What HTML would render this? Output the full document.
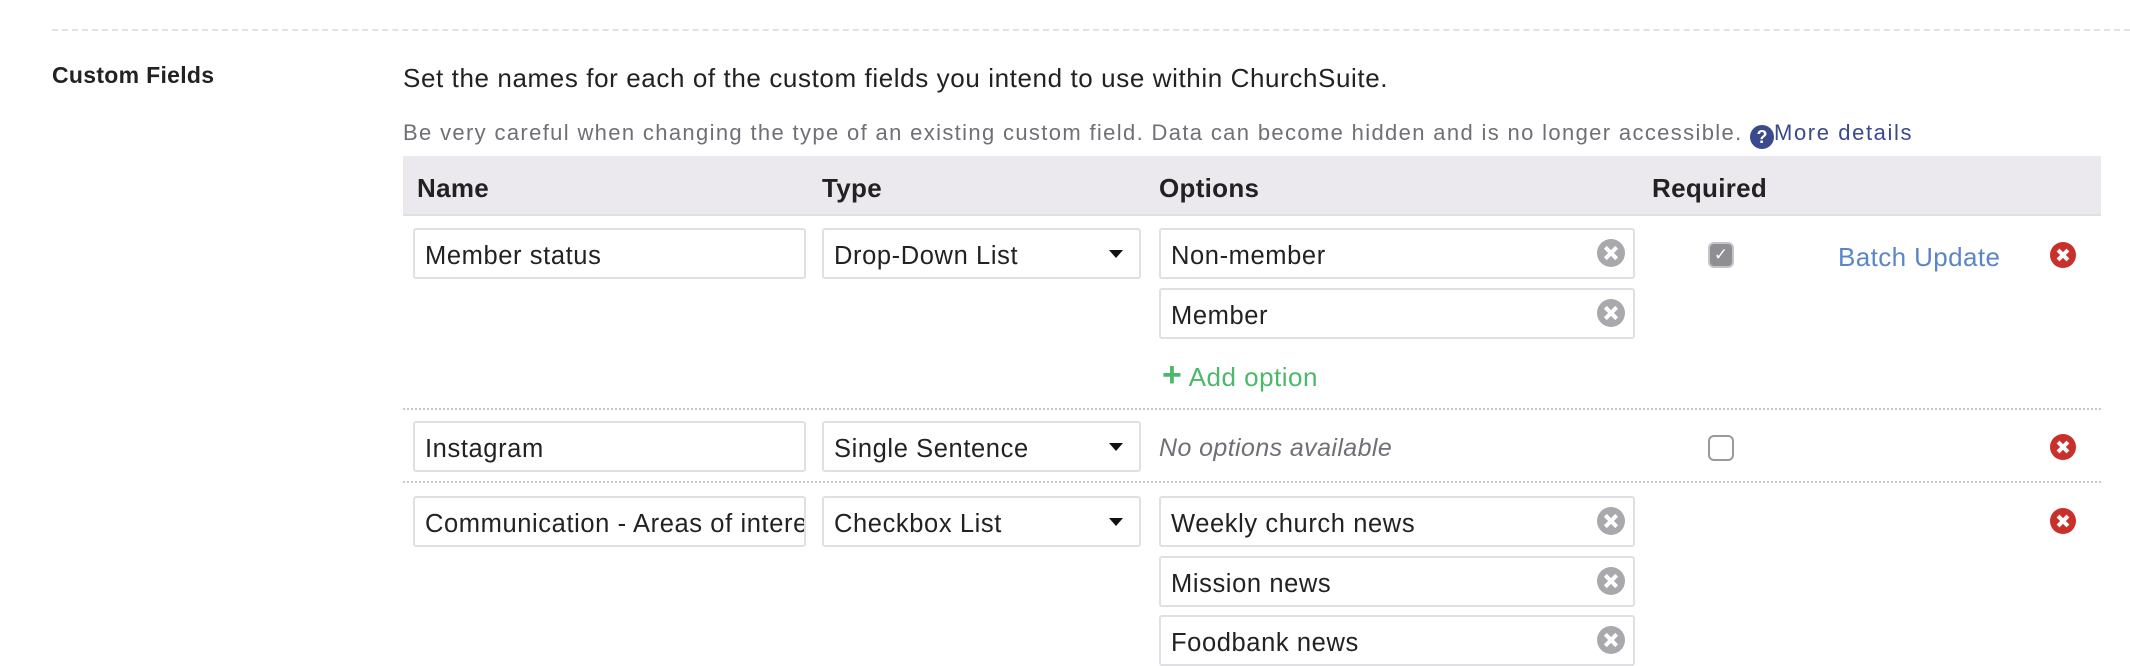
<!DOCTYPE html>
<html><head><meta charset="utf-8"><style>
*{box-sizing:border-box;margin:0;padding:0}
body{width:2130px;height:642px;overflow:hidden;background:#fff;font-family:"Liberation Sans",sans-serif;color:#222;position:relative}
.a{position:absolute;white-space:nowrap}
.dash{position:absolute;left:52px;right:0;top:29px;border-top:2px dashed #e2e2e6}
.dot{position:absolute;left:403px;width:1698px;border-top:2px dotted #c9c9cc}
.inp{position:absolute;height:51px;border:2px solid #e0dfe4;border-radius:3px;background:#fff;font-size:25.5px;letter-spacing:0.6px;line-height:47px;padding-top:3px;padding-left:10px;overflow:hidden;white-space:nowrap;color:#222}
.sel:after{content:"";position:absolute;right:16px;top:20px;border-left:7px solid transparent;border-right:7px solid transparent;border-top:8px solid #111}
.x{position:absolute;right:8px;top:9px;width:28px;height:28px;border-radius:50%;background:#a8a8ad}
.x:before,.x:after{content:"";position:absolute;left:12px;top:6px;width:4px;height:16px;background:#fff;transform:rotate(45deg)}
.x:after{transform:rotate(-45deg)}
.del{position:absolute;width:26px;height:26px;border-radius:50%;background:#c9302c}
.del:before,.del:after{content:"";position:absolute;left:11px;top:6px;width:4px;height:14px;background:#fff;transform:rotate(45deg)}
.del:after{transform:rotate(-45deg)}
.cb{position:absolute;width:26px;height:26px;border:2px solid #9a9a9e;border-radius:6px;background:#fff}
.h{position:absolute;white-space:nowrap;font-size:26px;font-weight:bold;letter-spacing:0.3px;top:173px}
</style></head><body>
<div class="dash"></div>
<div class="a" style="left:52px;top:62px;font-size:23px;font-weight:bold;letter-spacing:0.3px">Custom Fields</div>
<div class="a" style="left:403px;top:63px;font-size:26px;letter-spacing:0.6px">Set the names for each of the custom fields you intend to use within ChurchSuite.</div>
<div class="a" style="left:403px;top:120px;font-size:22px;letter-spacing:1.35px;color:#6f6f75">Be very careful when changing the type of an existing custom field. Data can become hidden and is no longer accessible. <span style="display:inline-block;width:24px;height:24px;border-radius:50%;background:#3a4a8c;color:#fff;font-weight:bold;font-size:18px;line-height:24px;text-align:center;vertical-align:-3px;letter-spacing:0">?</span><span style="color:#3a4a8c;letter-spacing:1.6px">More details</span></div>
<div style="position:absolute;left:403px;top:156px;width:1698px;height:60px;background:#ebe9ee;border-bottom:2px solid #e0dfe4"></div>
<div class="h" style="left:417px">Name</div>
<div class="h" style="left:822px">Type</div>
<div class="h" style="left:1159px">Options</div>
<div class="h" style="left:1652px">Required</div>

<div class="inp" style="left:413px;top:228px;width:393px">Member status</div>
<div class="inp sel" style="left:822px;top:228px;width:319px">Drop-Down List</div>
<div class="inp" style="left:1159px;top:228px;width:476px">Non-member<span class="x"></span></div>
<div class="inp" style="left:1159px;top:288px;width:476px">Member<span class="x"></span></div>
<div class="a" style="left:1162px;top:362px;font-size:26px;letter-spacing:0.5px;color:#4cb86a"><b style="font-size:34px;line-height:25px">+</b> Add option</div>
<div class="cb" style="left:1708px;top:242px;background:#8e8e93;border-color:#c4c4c8;color:#fff;font-size:17px;line-height:22px;text-align:center">✓</div>
<div class="a" style="left:1838px;top:242px;font-size:26px;letter-spacing:0.4px;color:#5a86c8">Batch Update</div>
<div class="del" style="left:2050px;top:242px"></div>

<div class="dot" style="top:408px"></div>
<div class="inp" style="left:413px;top:421px;width:393px">Instagram</div>
<div class="inp sel" style="left:822px;top:421px;width:319px">Single Sentence</div>
<div class="a" style="left:1159px;top:434px;font-size:25px;letter-spacing:0.4px;font-style:italic;color:#6f6f75">No options available</div>
<div class="cb" style="left:1708px;top:435px"></div>
<div class="del" style="left:2050px;top:434px"></div>

<div class="dot" style="top:481px"></div>
<div class="inp" style="left:413px;top:496px;width:393px">Communication - Areas of interest</div>
<div class="inp sel" style="left:822px;top:496px;width:319px">Checkbox List</div>
<div class="inp" style="left:1159px;top:496px;width:476px">Weekly church news<span class="x"></span></div>
<div class="inp" style="left:1159px;top:556px;width:476px">Mission news<span class="x"></span></div>
<div class="inp" style="left:1159px;top:615px;width:476px">Foodbank news<span class="x"></span></div>
<div class="del" style="left:2050px;top:508px"></div>
</body></html>
